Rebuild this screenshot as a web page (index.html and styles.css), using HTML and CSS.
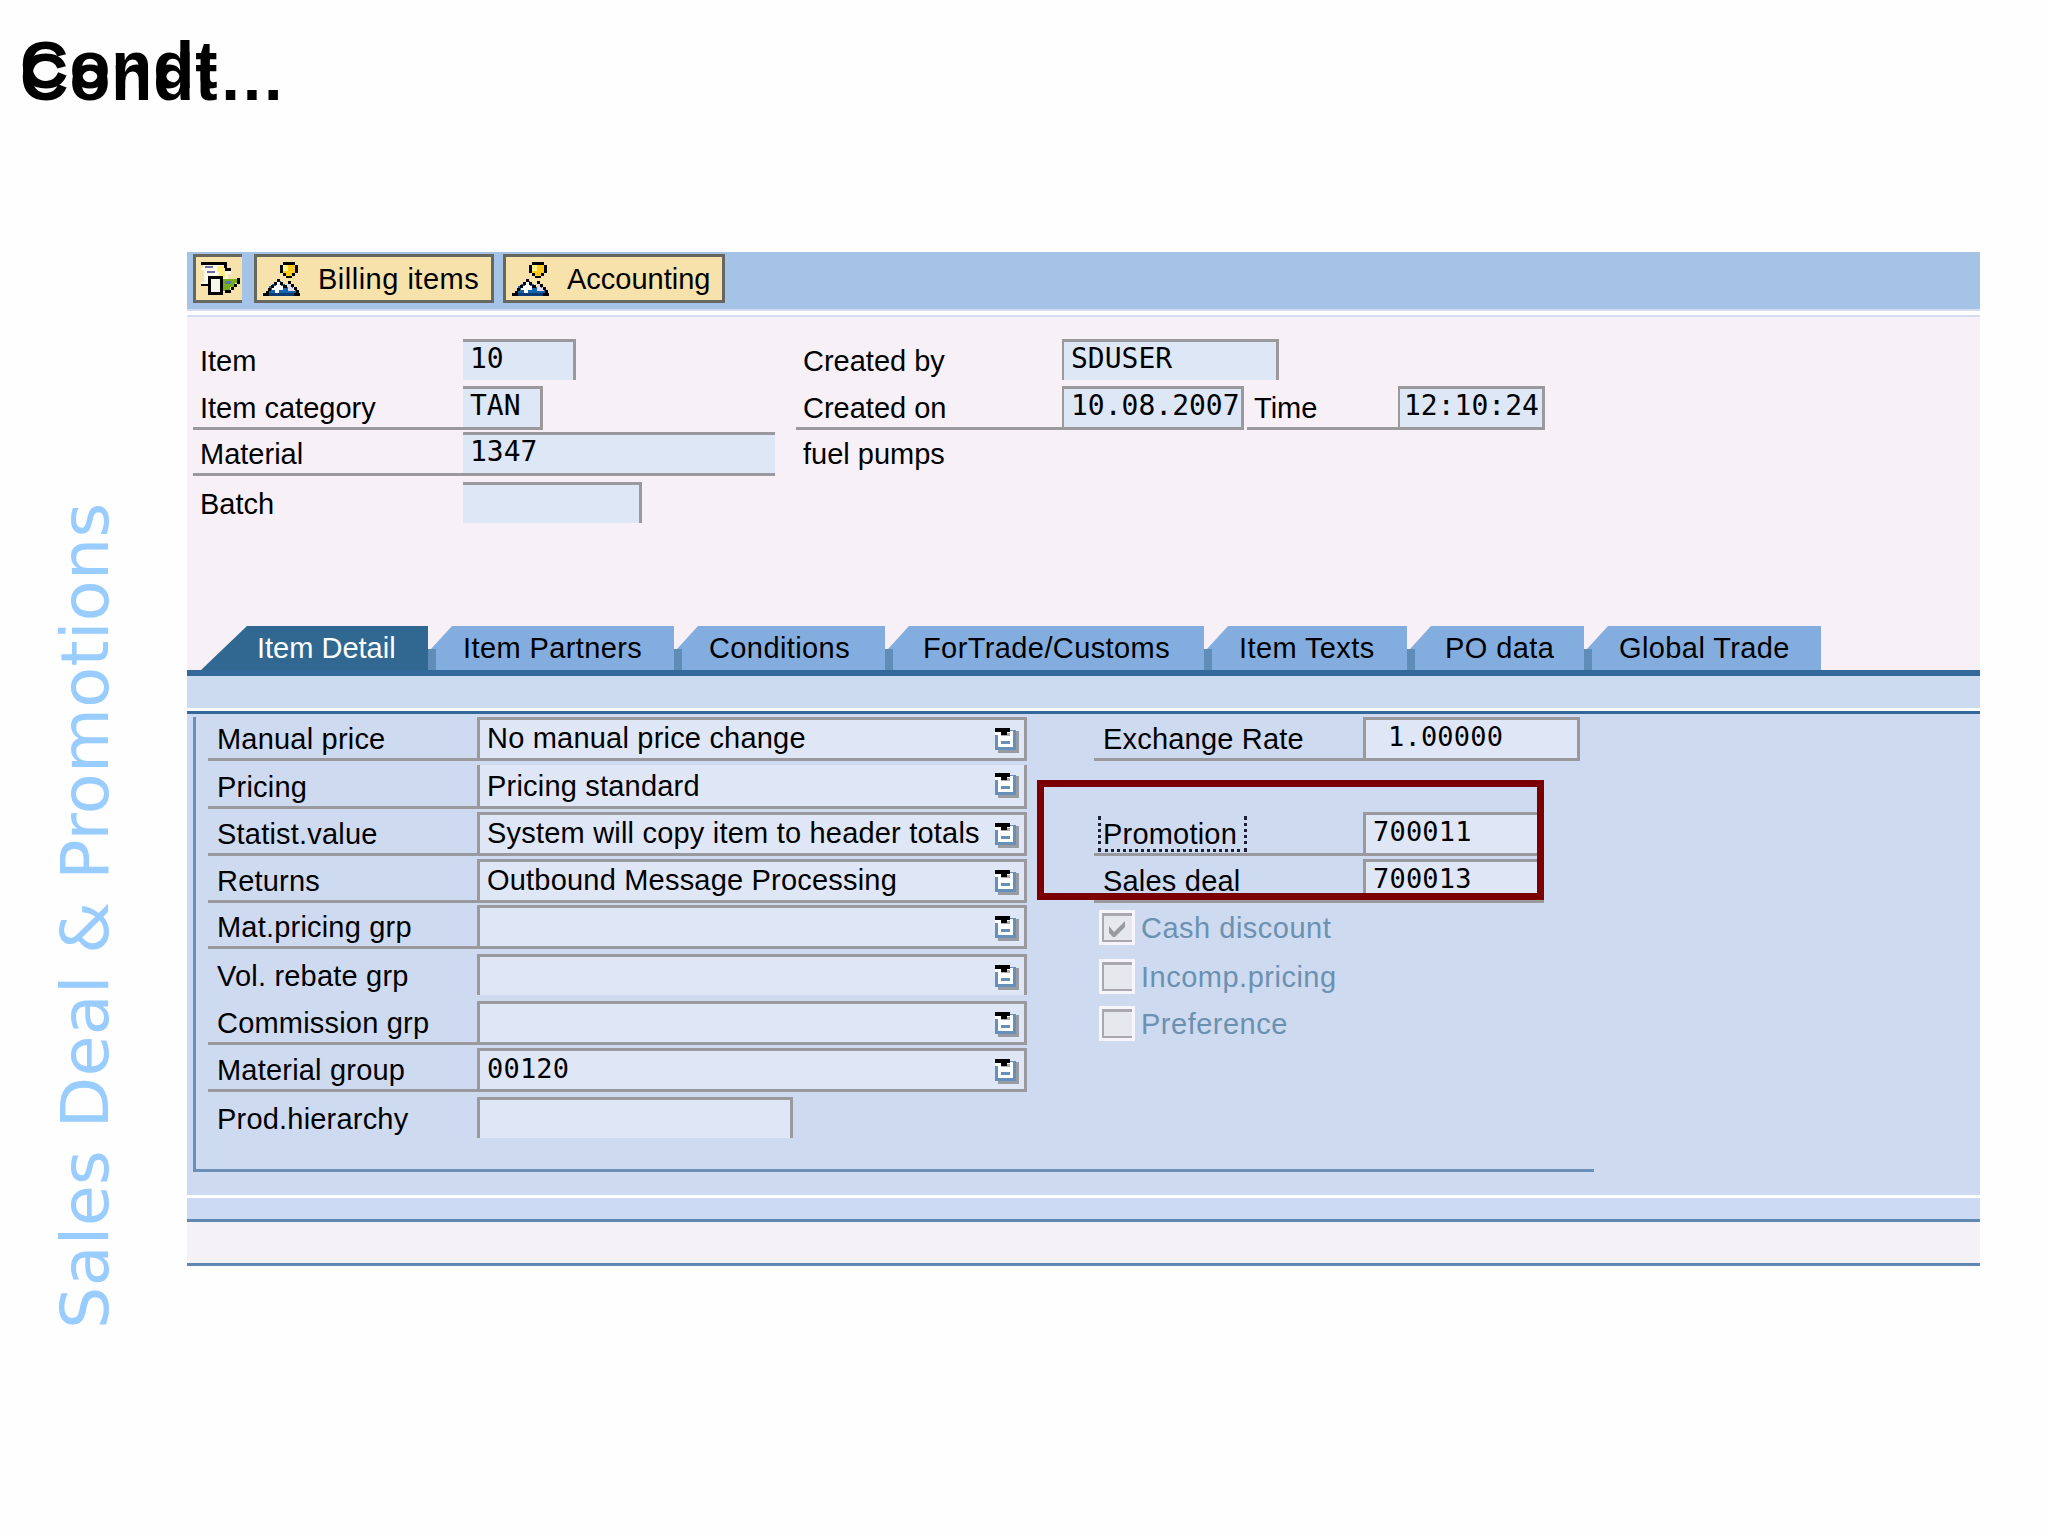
FILE: index.html
```html
<!DOCTYPE html>
<html lang="en">
  <head>
    <meta charset="utf-8">
    <title>Sales Deal &amp; Promotions</title>
    <link rel="stylesheet" href="styles.css">
  </head>
  <body>

    <svg class="sprite" aria-hidden="true">
      <symbol id="icon-display" viewBox="0 0 39 34" shape-rendering="crispEdges">
        <path fill="#fffbe8" d="M2 2h24v4h4v6h-3v12H0v-4h3V8H0V6h2z"/>
        <path fill="#ffec80" d="M16 4h8v12h-6v-6h-2z"/>
        <path fill="#000" d="M0 0h26v3H0zM23 3h3v3h-3zM24 6h6v3h-6zM0 22h7v2H0z"/>
        <path fill="#6c6cab" d="M4 4h8v2H4zM6 9h8v2H6z"/>
        <path fill="#78ad1c" d="M22 17h15v4h-3v4h-5v4h-7z"/>
        <path fill="#000" d="M36 16h3v6h-3zM33 22h3v3h-3zM30 25h3v3h-3zM24 28h6v3h-6z"/>
        <path fill="#58799b" d="M24 19h6v3h-6z"/>
        <path fill="#000" d="M7 14h15v19H7z"/>
        <path fill="#f4f7ea" d="M10 17h9v13h-9z"/>
      </symbol>
      <symbol id="icon-overview" viewBox="0 0 37 34" shape-rendering="crispEdges">
        <path fill="#000" d="M20 0h12v3h-12zM17 3h3v8h-3zM32 3h3v8h-3zM20 11h3v3h-3zM29 11h3v3h-3zM23 14h6v2h-6z"/>
        <path fill="#ffcb1c" d="M20 3h12v8h-3v3h-6v-3h-3z"/>
        <path fill="#fff58c" d="M20 3h5v6h-5z"/>
        <path fill="#1565ad" d="M9 22h6v-3h3v3h4v3h3v-3h5v4h3v4h3v2H3v-3h3v-5h3z"/>
        <path fill="#fff" d="M13 20h5v4h2v4h-4v3h-4v-3H9v-4h4z"/>
        <path fill="#e2d9ee" d="M25 22h4v4h3v3h-7z"/>
        <path fill="#000" d="M14 17h3v3h-3zM11 20h3v3h-3zM17 20h3v3h-3zM8 23h3v3H8zM5 26h3v3H5zM3 29h3v3H3zM0 31h6v3H0zM31 31h6v3h-6zM20 23h4v3h-4zM25 19h3v3h-3zM28 22h3v3h-3zM31 25h3v3h-3zM33 28h3v3h-3z"/>
        <path fill="#0c3a75" d="M6 31h25v3H6z"/>
      </symbol>
      <symbol id="icon-list" viewBox="0 0 24 25" shape-rendering="crispEdges">
        <path fill="#999ba3" d="M3 3h21v22H3z"/>
        <path fill="#6690b9" d="M0 2h21v20H0z"/>
        <path fill="#fff" d="M0 3h18v16H3V7H0z"/>
        <path fill="#aaa" d="M6 5h9v3H6z"/>
        <path fill="#000" d="M0 0h15v4h-3v3H6V4H0z"/>
        <path fill="#6690b9" d="M6 13h9v3H6z"/>
      </symbol>
    </svg>

    <h1 class="slide-title">Condt<span class="slide-title-copy">Condt…</span></h1>

    <div class="slide">
      <div class="slide-side">Sales Deal &amp; Promotions</div>

      <div class="window">
        <div class="toolbar">
          <button class="btn btn-icon"><svg class="icon-display"><use href="#icon-display"/></svg></button>
          <button class="btn btn-billing"><svg class="icon-overview"><use href="#icon-overview"/></svg>Billing items</button>
          <button class="btn btn-accounting"><svg class="icon-overview"><use href="#icon-overview"/></svg>Accounting</button>
        </div>

        <div class="header">
          <div class="header-col">
            <div class="row row-open"><label>Item</label><div class="field w-item">10</div></div>
            <div class="row"><label>Item category</label><div class="field w-category">TAN</div></div>
            <div class="row"><label>Material</label><div class="field w-material">1347</div></div>
            <div class="row row-open"><label>Batch</label><div class="field w-batch"></div></div>
          </div>
          <div class="header-col header-col-right">
            <div class="row row-open"><label>Created by</label><div class="field w-user">SDUSER</div></div>
            <div class="row-pair">
              <div class="row"><label>Created on</label><div class="field w-date">10.08.2007</div></div>
              <div class="row row-time"><label>Time</label><div class="field w-time">12:10:24</div></div>
            </div>
            <div class="row row-text"><label>fuel pumps</label></div>
          </div>
        </div>

        <div class="tabs">
          <div class="tab tab-active t1">Item Detail</div>
          <div class="tab t2">Item Partners</div>
          <div class="tab t3">Conditions</div>
          <div class="tab t4">ForTrade/Customs</div>
          <div class="tab t5">Item Texts</div>
          <div class="tab t6">PO data</div>
          <div class="tab t7">Global Trade</div>
        </div>
        <div class="tab-strip"></div>

        <div class="panel">
          <div class="group">
            <div class="details">
              <div class="row"><label>Manual price</label><div class="field">No manual price change<svg class="icon-list"><use href="#icon-list"/></svg></div></div>
              <div class="row row-topless"><label>Pricing</label><div class="field">Pricing standard<svg class="icon-list"><use href="#icon-list"/></svg></div></div>
              <div class="row"><label>Statist.value</label><div class="field">System will copy item to header totals<svg class="icon-list"><use href="#icon-list"/></svg></div></div>
              <div class="row"><label>Returns</label><div class="field">Outbound Message Processing<svg class="icon-list"><use href="#icon-list"/></svg></div></div>
              <div class="row"><label>Mat.pricing grp</label><div class="field"><svg class="icon-list"><use href="#icon-list"/></svg></div></div>
              <div class="row row-open"><label>Vol. rebate grp</label><div class="field"><svg class="icon-list"><use href="#icon-list"/></svg></div></div>
              <div class="row"><label>Commission grp</label><div class="field"><svg class="icon-list"><use href="#icon-list"/></svg></div></div>
              <div class="row"><label>Material group</label><div class="field field-code">00120<svg class="icon-list"><use href="#icon-list"/></svg></div></div>
              <div class="row row-open"><label>Prod.hierarchy</label><div class="field w-hierarchy"></div></div>
            </div>

            <div class="pricing">
              <div class="row"><label>Exchange Rate</label><div class="field field-code w-rate">1.00000</div></div>
              <div></div>
              <div class="row"><label><span class="focused">Promotion</span></label><div class="field field-code">700011</div></div>
              <div class="row"><label>Sales deal</label><div class="field field-code">700013</div></div>
              <div class="check"><span class="check-box"><svg class="check-mark" viewBox="0 0 18 18"><path d="M1 6l5 6L17 1v6L7 17H5L1 13z"/></svg></span>Cash discount</div>
              <div class="check"><span class="check-box"></span>Incomp.pricing</div>
              <div class="check"><span class="check-box"></span>Preference</div>
              <div class="highlight"></div>
            </div>
          </div>
        </div>
        <div class="panel-foot"></div>
        <div class="status"></div>
      </div>
    </div>

  </body>
</html>
```

FILE: styles.css
```css
* {
  box-sizing: border-box;
}

html, body {
  margin: 0;
  padding: 0;
  background: #fefefe;
  color: #000;
  font: 29px/34px "Liberation Sans", Arial, sans-serif;
}

body {
  width: 2048px;
  height: 1536px;
  overflow: hidden;
}

.sprite {
  display: none;
}

.slide-title {
  position: relative;
  height: 252px;
  margin: 0;
  padding: 27px 0 0 20px;
  font-size: 67px;
  line-height: 76px;
  letter-spacing: 1px;
}

.slide-title-copy {
  position: absolute;
  left: 20px;
  top: 39px;
}

.slide {
  display: flex;
}

/* vertical caption, reads bottom to top */
.slide-side {
  width: 187px;
  height: 1077px;
  padding: 0 46px 253px 0;
  writing-mode: vertical-rl;
  transform: rotate(180deg);
  font: 66.67px/78px "DejaVu Sans", Verdana, sans-serif;
  letter-spacing: .35px;
  color: #99ccff;
  white-space: nowrap;
}

.window {
  width: 1793px;
}

.toolbar {
  display: flex;
  height: 59px;
  padding: 2px 0 0 6px;
  background: #a5c3e7;
  border-bottom: 2px solid #d3dcf0;
}

.btn {
  display: flex;
  align-items: center;
  height: 49px;
  padding: 0 0 0 6px;
  border: 3px solid #66675e;
  background: #f7e2ab;
  color: #000;
  font: inherit;
  white-space: nowrap;
}

.btn-icon {
  width: 49px;
  margin-right: 12px;
  padding-left: 5px;
  border-right: 0;
}

.btn-billing {
  width: 240px;
  margin-right: 9px;
  letter-spacing: .5px;
}

.btn-accounting {
  width: 222px;
}

.icon-display {
  width: 39px;
  height: 34px;
}

.icon-overview {
  width: 37px;
  height: 34px;
  margin-right: 18px;
}

.row {
  display: flex;
  height: 44px;
  border-bottom: 3px solid #99999e;
  white-space: nowrap;
}

.row label {
  flex: none;
  padding-top: 5px;
}

.row-open,
.row-text {
  height: 41px;
  border-bottom: 0;
}

.field {
  position: relative;
  border: 3px solid #99999e;
  border-bottom: 0;
  background: #dfe6f6;
}

.header {
  display: flex;
  height: 311px;
  margin-top: 4px;
  padding: 22px 0 0 6px;
  border-top: 2px solid #d3dcf0;
  background: #f7f1f7;
}

.header-col {
  display: grid;
  grid-template-rows: 47px 46px 50px 41px;
  width: 603px;
  align-items: start;
  align-content: start;
  justify-items: start;
}

.header-col label {
  width: 270px;
  padding-left: 7px;
}

.header-col .field {
  border-left: 0;
  padding-left: 7px;
  background: #dde7f6;
  font: 28px/34px "DejaVu Sans Mono", monospace;
}

.header-col-right label {
  width: 266px;
}

.header-col-right .field {
  border-left: 2px solid #99999e;
}

.header-col .w-time {
  padding-left: 4px;
}

.row-pair {
  display: flex;
}

.row-pair .row-time {
  margin-left: 3px;
}

.row-time label {
  width: 151px;
}

.w-item { width: 113px; }
.w-category { width: 80px; }
.header-col .w-material { width: 312px; border-right: 0; }
.w-batch { width: 179px; }
.w-user { width: 217px; }
.w-date { width: 182px; }
.w-time { width: 147px; }

.tabs {
  display: flex;
  height: 44px;
  padding-left: 14px;
  background: #f7f1f7;
}

.tab {
  padding: 5px 0 0 35px;
  background: linear-gradient(#5f8db8, #5f8db8) left bottom / 8px 21px no-repeat, #83addf;
  clip-path: polygon(0 23px, 3px 23px, 24px 0, 100% 0, 100% 100%, 0 100%);
  letter-spacing: .4px;
  white-space: nowrap;
}

.tab-active {
  padding-left: 56px;
  background: #306892;
  clip-path: polygon(0 100%, 46px 0, 100% 0, 100% 100%);
  color: #fff;
  letter-spacing: 0;
}

.t1 { width: 227px; }
.t2 { width: 246px; }
.t3 { width: 211px; }
.t4 { width: 319px; padding-left: 38px; }
.t5 { width: 203px; }
.t6 { width: 177px; padding-left: 38px; }
.t7 { width: 237px; }

.tab-strip {
  height: 44px;
  border-top: 6px solid #32689a;
  border-bottom: 3px solid #32689a;
  background: linear-gradient(#fff, #fff) left bottom / 100% 3px no-repeat, #cddbf1;
}

.panel {
  height: 481px;
  padding: 3px 0 0 6px;
  background: #cedaf0;
}

.group {
  position: relative;
  display: flex;
  width: 1401px;
  height: 455px;
  border-left: 3px solid #6b8fb7;
  border-bottom: 3px solid #6b8fb7;
  letter-spacing: .2px;
}

.details,
.pricing {
  display: grid;
  grid-template-rows: 48px 47px 47px 46px 49px 47px 47px 49px 41px;
  align-items: start;
}

.details {
  width: 831px;
  padding-left: 12px;
}

.details label {
  width: 269px;
  padding: 5px 0 0 9px;
}

.details .field {
  width: 550px;
  padding: 1px 0 0 7px;
}

.details .field.w-hierarchy {
  width: 316px;
}

.details .row-topless .field {
  border-top: 0;
  padding-top: 4px;
}

.details .field-code,
.pricing .field-code {
  font: 27px/34px "DejaVu Sans Mono", monospace;
}

/* matchcode button at the right end of a field */
.icon-list {
  position: absolute;
  right: 5px;
  top: 8px;
  width: 24px;
  height: 25px;
}

.pricing {
  position: relative;
  width: 486px;
  padding-left: 67px;
}

.pricing label {
  width: 269px;
  padding: 5px 0 0 9px;
}

.pricing .row {
  width: 450px;
}

.pricing .field {
  width: 181px;
  padding: 0 0 0 7px;
}

.pricing .row .w-rate {
  flex: none;
  width: 217px;
  padding-left: 22px;
}

.pricing .row:first-child {
  width: 486px;
}

.focused {
  display: block;
  width: 149px;
  height: 36px;
  margin: -1px 0 0 -5px;
  padding: 1px 0 0 2px;
  border: 3px dotted #1d2036;
  border-top: 0;
  line-height: 34px;
}

.check {
  display: flex;
  margin-top: 5px;
  padding-left: 5px;
  color: #6b91b1;
  line-height: 36px;
  letter-spacing: .5px;
  white-space: nowrap;
}

.check-box {
  width: 36px;
  height: 35px;
  margin-right: 6px;
  padding: 2px;
  border: 3px solid #f7f4fb;
  background: #e7e8ee;
  box-shadow: inset 2px 3px 0 #a9a9ad, inset 0 -2px 0 #a9a9ad;
}

.check-mark {
  display: block;
  width: 18px;
  height: 18px;
  margin: 5px 0 0 4px;
  fill: #99999e;
}

/* red frame drawn over the promotion fields */
.highlight {
  position: absolute;
  left: 10px;
  top: 63px;
  width: 507px;
  height: 120px;
  border: 7px solid #7c0000;
}

.panel-foot {
  height: 27px;
  border-top: 3px solid #fff;
  border-bottom: 3px solid #6188b2;
  background: #ccdbf3;
}

.status {
  height: 44px;
  border-bottom: 3px solid #6188b2;
  background: #f4f2f6;
}
```
